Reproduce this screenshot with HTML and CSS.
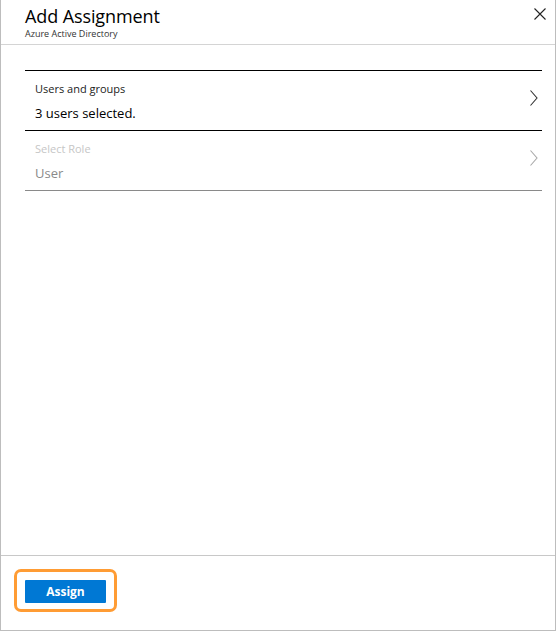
FILE: index.html
```html
<!DOCTYPE html>
<html>
<head>
<meta charset="utf-8">
<link rel="stylesheet" href="styles.css">
</head>
<body>
<div class="panel">
  <header class="header">
    <div class="titles">
      <h1 class="title">Add Assignment</h1>
      <div class="subtitle">Azure Active Directory</div>
    </div>
    <button class="close" aria-label="Close">
      <svg width="12" height="12" viewBox="0 0 12 12"><path d="M0.5 0.5L11.5 11.5M11.5 0.5L0.5 11.5" stroke="#222" stroke-width="1.1" fill="none"/></svg>
    </button>
  </header>
  <main class="content">
    <div class="row">
      <div class="row-text">
        <div class="label">Users and groups</div>
        <div class="value">3 users selected.</div>
      </div>
      <svg class="chev" width="8" height="16" viewBox="0 0 8 16"><path d="M0.5 0.5L7 8L0.5 15.5" stroke="#333" stroke-width="1.1" fill="none"/></svg>
    </div>
    <div class="row row-disabled">
      <div class="row-text">
        <div class="label">Select Role</div>
        <div class="value">User</div>
      </div>
      <svg class="chev" width="8" height="16" viewBox="0 0 8 16"><path d="M0.5 0.5L7 8L0.5 15.5" stroke="#aaa" stroke-width="1.1" fill="none"/></svg>
    </div>
  </main>
  <footer class="footer">
    <div class="ring">
      <button class="assign">Assign</button>
    </div>
  </footer>
</div>
</body>
</html>
```
FILE: styles.css
```css
html, body {
  margin: 0;
  padding: 0;
  background: #fff;
}
body {
  font-family: "Open Sans", "Noto Sans", sans-serif;
  color: #000;
}
.panel {
  box-sizing: border-box;
  width: 556px;
  height: 631px;
  border-left: 1px solid #bdbdbd;
  border-right: 1px solid #bdbdbd;
  border-bottom: 1px solid #bdbdbd;
  display: flex;
  flex-direction: column;
}
.header {
  box-sizing: border-box;
  height: 45px;
  border-bottom: 1px solid #d4d4d4;
  display: flex;
  justify-content: space-between;
  align-items: flex-start;
  padding: 0 9px 0 24px;
}
.title {
  margin: 0;
  font-size: 18px;
  font-weight: 400;
  line-height: 24px;
  padding-top: 4px;
  letter-spacing: -0.1px;
}
.subtitle {
  font-size: 9px;
  line-height: 12px;
  color: #333;
}
.close {
  border: 0;
  background: none;
  padding: 0;
  margin-top: 8px;
  width: 12px;
  height: 12px;
  display: flex;
}
.content {
  flex: 1;
  padding: 25px 13px 0 24px;
}
.row {
  box-sizing: border-box;
  height: 60px;
  border-top: 1px solid #000;
  display: flex;
  justify-content: space-between;
  align-items: center;
  padding: 0 4px 0 10px;
}
.row-disabled {
  border-bottom: 1px solid #8a8a8a;
  height: 61px;
}
.row-text {
  display: flex;
  flex-direction: column;
  gap: 9px;
  padding-top: 2px;
}
.label {
  font-size: 11px;
  line-height: 14px;
  color: #222;
}
.value {
  font-size: 13px;
  line-height: 16px;
  color: #000;
}
.row-disabled .label {
  color: #c6c6c6;
}
.row-disabled .value {
  color: #8a8a8a;
}
.chev {
  display: block;
  margin-bottom: 5px;
}
.footer {
  box-sizing: border-box;
  height: 75px;
  border-top: 1px solid #c8c8c8;
  padding: 13px 0 0 13px;
}
.ring {
  display: inline-block;
  border: 3px solid #ff9c34;
  border-radius: 7px;
  padding: 8px 8px 6px 8px;
}
.assign {
  display: block;
  width: 81px;
  height: 23px;
  border: 0;
  border-radius: 1px;
  background: #0078d4;
  color: #fff;
  font-family: "Open Sans", "Noto Sans", sans-serif;
  font-weight: 700;
  font-size: 12px;
  padding: 0;
}
```
